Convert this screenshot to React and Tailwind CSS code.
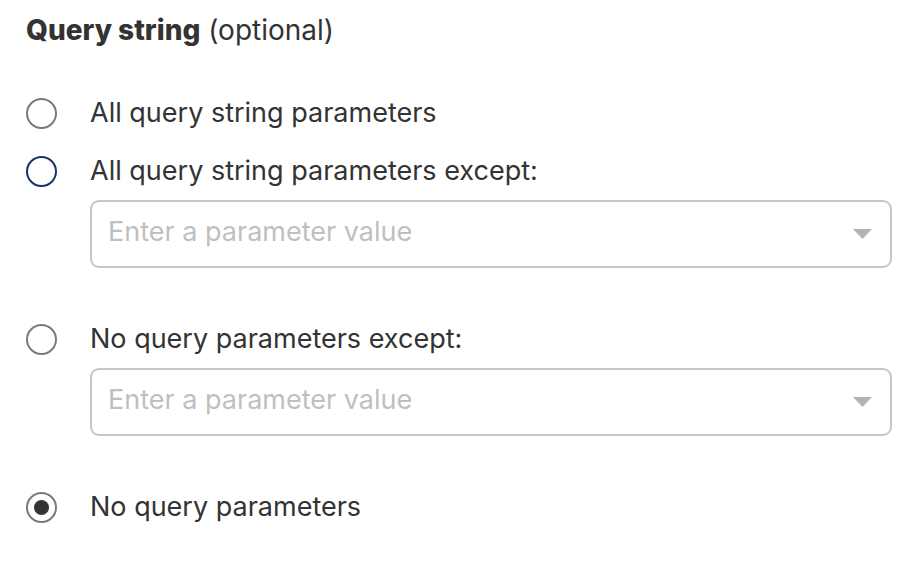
import React from 'react'

function Radio({ checked, focused }) {
  const ring = focused ? 'border-[#16336b]' : 'border-[#7a7a7a]'
  return (
    <span className={`flex h-[31px] w-[31px] shrink-0 items-center justify-center rounded-full border-2 ${ring} bg-white`}>
      {checked && <span className="h-[15px] w-[15px] rounded-full bg-[#333333]" />}
    </span>
  )
}

function Option({ label, checked, focused }) {
  return (
    <label className="flex h-[58px] items-center gap-[33px]">
      <Radio checked={checked} focused={focused} />
      <span className="text-[27px] leading-[32px] text-[#333333]">{label}</span>
    </label>
  )
}

function ParamSelect() {
  return (
    <div className="ml-[64px] flex h-[68px] w-[802px] items-center justify-between rounded-[9px] border-2 border-[#c6c6c6] bg-white pl-[16px] pr-[18px]">
      <span className="pb-[5px] text-[27px] leading-[32px] text-[#bfbfbf]">Enter a parameter value</span>
      <svg width="19" height="10" viewBox="0 0 19 10">
        <path d="M0 0 H19 L9.5 10 Z" fill="#b3b3b3" />
      </svg>
    </div>
  )
}

export default function App() {
  return (
    <div className="h-[564px] w-[920px] bg-white pl-[26px] pt-[14px]" style={{ fontFamily: 'Inter, "Noto Sans", sans-serif' }}>
      <h2 className="h-[70px] text-[28px] leading-[32px] text-[#333333]">
        <span className="font-extrabold">Query string</span> (optional)
      </h2>
      <Option label="All query string parameters" />
      <Option label="All query string parameters except:" focused />
      <ParamSelect />
      <div className="h-[42px]" />
      <Option label="No query parameters except:" />
      <ParamSelect />
      <div className="h-[42px]" />
      <Option label="No query parameters" checked />
    </div>
  )
}
